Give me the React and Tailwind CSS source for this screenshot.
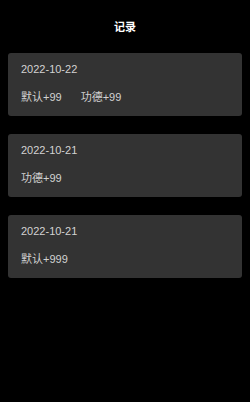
const records = [
  { date: '2022-10-22', items: ['默认+99', '功德+99'] },
  { date: '2022-10-21', items: ['功德+99'] },
  { date: '2022-10-21', items: ['默认+999'] },
];

const font = { fontFamily: '"Liberation Sans", "Noto Sans CJK SC", sans-serif' };

export default function App() {
  return (
    <div className="min-h-[402px] w-[250px] bg-black" style={font}>
      <h1 className="pt-[20px] text-center text-[11px] font-bold leading-[14px] text-white">记录</h1>
      <div className="mt-[19px] flex flex-col gap-[18px] px-[8px]">
        {records.map((record, index) => (
          <div key={index} className="h-[63px] rounded-[3px] bg-[#333333] px-[13px] pt-[9px]">
            <p className="text-[11px] leading-[14px] text-[#d2d2d2]">{record.date}</p>
            <div className="mt-[14px] flex gap-[19px] text-[11px] leading-[14px] text-[#d2d2d2]">
              {record.items.map((item) => (
                <span key={item}>{item}</span>
              ))}
            </div>
          </div>
        ))}
      </div>
    </div>
  );
}
